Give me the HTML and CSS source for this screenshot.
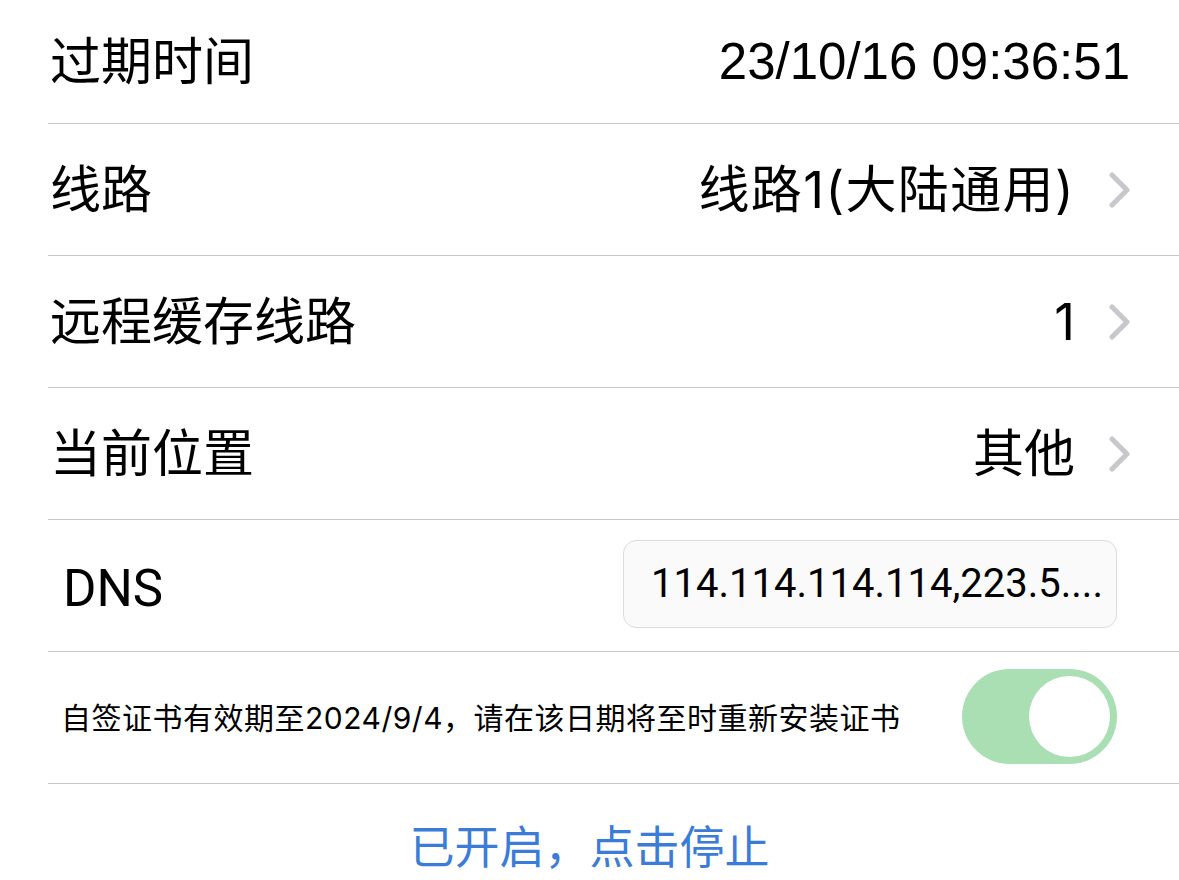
FILE: index.html
```html
<!DOCTYPE html>
<html lang="zh-CN">
<head>
<meta charset="utf-8">
<link rel="stylesheet" href="styles.css">
</head>
<body>
<div class="list">
  <div class="row row-first">
    <span class="label">过期时间</span>
    <span class="value value-date">23/10/16 09:36:51</span>
  </div>
  <div class="row">
    <span class="label">线路</span>
    <span class="value-wrap"><span class="value value-spaced">线路1(大陆通用)</span><svg class="chev" viewBox="0 0 24 36" width="24" height="36"><path d="M4 3 L19 18 L4 33" fill="none" stroke="#c7c7cc" stroke-width="5" stroke-linecap="round" stroke-linejoin="round"/></svg></span>
  </div>
  <div class="row">
    <span class="label">远程缓存线路</span>
    <span class="value-wrap"><span class="value">1</span><svg class="chev" viewBox="0 0 24 36" width="24" height="36"><path d="M4 3 L19 18 L4 33" fill="none" stroke="#c7c7cc" stroke-width="5" stroke-linecap="round" stroke-linejoin="round"/></svg></span>
  </div>
  <div class="row">
    <span class="label">当前位置</span>
    <span class="value-wrap"><span class="value">其他</span><svg class="chev" viewBox="0 0 24 36" width="24" height="36"><path d="M4 3 L19 18 L4 33" fill="none" stroke="#c7c7cc" stroke-width="5" stroke-linecap="round" stroke-linejoin="round"/></svg></span>
  </div>
  <div class="row row-inset">
    <span class="label label-latin">DNS</span>
    <div class="field">114.114.114.114,223.5....</div>
  </div>
  <div class="row row-inset">
    <span class="note">自签证书有效期至2024/9/4，请在该日期将至时重新安装证书</span>
    <div class="toggle"><div class="knob"></div></div>
  </div>
</div>
<div class="action">已开启，点击停止</div>
</body>
</html>
```
FILE: styles.css
```css
html, body {
  margin: 0;
  padding: 0;
  background: #ffffff;
}
body {
  font-family: "Inter", "Noto Sans CJK SC", sans-serif;
  color: #000;
  width: 1179px;
  height: 880px;
  overflow: hidden;
}
.list {
  display: flex;
  flex-direction: column;
}
.row {
  margin-left: 48px;
  padding: 0 49px 0 2px;
  height: 131px;
  border-bottom: 1px solid #c8c8c8;
  display: flex;
  align-items: center;
  justify-content: space-between;
}
.row-first {
  height: 123px;
}
.label {
  font-size: 51px;
  line-height: 1;
}
.label-latin {
  font-family: "Roboto", "Noto Sans CJK SC", sans-serif;
  margin-top: 6px;
}
.value {
  font-size: 51px;
  line-height: 1;
}
.value-date {
  font-family: "Liberation Sans", "Noto Sans CJK SC", sans-serif;
}
.value-spaced {
  letter-spacing: 1.4px;
}
.value-wrap {
  display: flex;
  align-items: center;
  gap: 33px;
}
.chev {
  display: block;
  margin-right: -2px;
}
.row-inset {
  padding-left: 15px;
  padding-right: 62px;
}
.field {
  width: 494px;
  height: 88px;
  box-sizing: border-box;
  border: 1px solid #dcdcdc;
  border-radius: 13px;
  background: #fafafa;
  display: flex;
  align-items: center;
  padding-left: 27px;
  font-family: "Roboto", "Noto Sans CJK SC", sans-serif;
  font-size: 40px;
  margin-top: -4px;
}
.note {
  font-size: 30px;
  line-height: 1;
  letter-spacing: 0.5px;
  margin-left: -2px;
}
.toggle {
  width: 155px;
  height: 95px;
  border-radius: 48px;
  background: #a9dfb3;
  position: relative;
  margin-top: -3px;
}
.knob {
  position: absolute;
  right: 7px;
  top: 7px;
  width: 81px;
  height: 81px;
  border-radius: 50%;
  background: #fff;
}
.action {
  height: 96px;
  display: flex;
  align-items: center;
  justify-content: center;
  color: #3b7cd9;
  font-size: 45px;
  padding-top: 24px;
  box-sizing: border-box;
}
```
